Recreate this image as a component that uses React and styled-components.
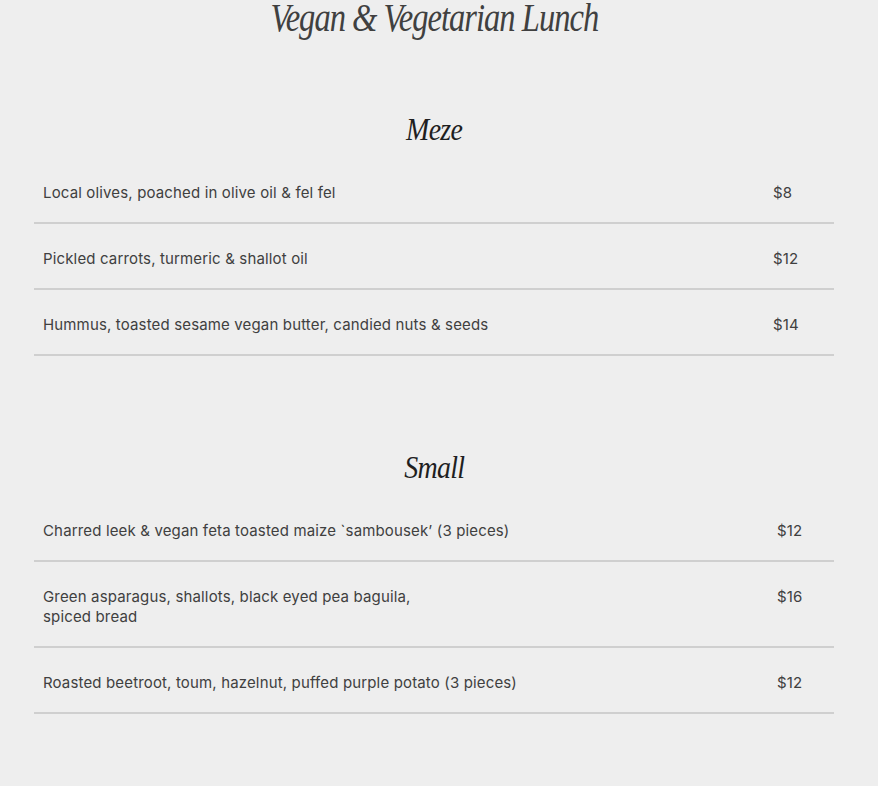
import React from 'react'
import styled, { createGlobalStyle } from 'styled-components'

const GlobalStyle = createGlobalStyle`
  html, body {
    margin: 0;
    padding: 0;
    background: #eeeeee;
  }
  body {
    font-family: Inter, "Noto Sans", sans-serif;
    color: #404040;
  }
`

const sections = [
  {
    title: 'Meze',
    priceCol: 52,
    items: [
      { name: 'Local olives, poached in olive oil & fel fel', price: '$8' },
      { name: 'Pickled carrots, turmeric & shallot oil', price: '$12' },
      { name: 'Hummus, toasted sesame vegan butter, candied nuts & seeds', price: '$14' },
    ],
  },
  {
    title: 'Small',
    priceCol: 48,
    items: [
      { name: 'Charred leek & vegan feta toasted maize `sambousek’ (3 pieces)', price: '$12' },
      { name: ['Green asparagus, shallots, black eyed pea baguila,', 'spiced bread'], price: '$16' },
      { name: 'Roasted beetroot, toum, hazelnut, puffed purple potato (3 pieces)', price: '$12' },
    ],
  },
]

export default function App() {
  return (
    <Page>
      <GlobalStyle />
      <Header>
        <MenuTitle>Vegan &amp; Vegetarian Lunch</MenuTitle>
      </Header>
      {sections.map((section) => (
        <Section key={section.title}>
          <SectionTitle>
            <Condensed>{section.title}</Condensed>
          </SectionTitle>
          <ItemList>
            {section.items.map((item, i) => (
              <Row key={i} $priceCol={section.priceCol}>
                <Name>
                  {Array.isArray(item.name)
                    ? item.name.map((l, j) => <div key={j}>{l}</div>)
                    : item.name}
                </Name>
                <Price>{item.price}</Price>
              </Row>
            ))}
          </ItemList>
        </Section>
      ))}
    </Page>
  )
}

const Page = styled.div`
  width: 800px;
  margin: 0 0 0 34px;
  padding-bottom: 60px;
`

const Header = styled.header`
  display: flex;
  justify-content: center;
  height: 38px;
`

const MenuTitle = styled.h1`
  margin: 0;
  font-family: "Liberation Serif", serif;
  font-style: italic;
  font-weight: 400;
  font-size: 39px;
  line-height: 35px;
  letter-spacing: -1.2px;
  color: #404040;
  transform: scaleX(0.835);
  white-space: nowrap;
`

const Section = styled.section`
  padding-top: 72px;
  & + & {
    padding-top: 92px;
  }
`

const SectionTitle = styled.h2`
  display: flex;
  justify-content: center;
  margin: 0;
  height: 40px;
  padding-bottom: 8px;
  font-family: "Liberation Serif", serif;
  font-style: italic;
  font-weight: 400;
  font-size: 31px;
  line-height: 40px;
  letter-spacing: -0.8px;
  color: #1f1f1f;
`

const Condensed = styled.span`
  display: inline-block;
  transform: scaleX(0.9);
`

const ItemList = styled.div`
  display: flex;
  flex-direction: column;
`

const Row = styled.div`
  display: grid;
  grid-template-columns: 1fr ${(p) => p.$priceCol}px;
  padding: 25px 9px 19px;
  border-bottom: 2px solid #cfcfcf;
  font-size: 15px;
  line-height: 20px;
  letter-spacing: 0.15px;
`

const Name = styled.div``

const Price = styled.div``
